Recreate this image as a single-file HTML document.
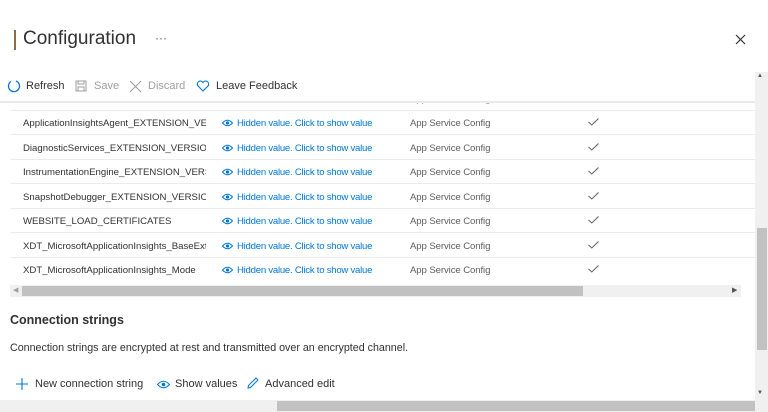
<!DOCTYPE html>
<html><head><style>
*{margin:0;padding:0;box-sizing:border-box}
body{width:768px;height:412px;overflow:hidden;background:#fff;font-family:"Liberation Sans",sans-serif;color:#323130;position:relative}
.abs{position:absolute;white-space:nowrap}
.row{position:absolute;left:10px;width:746px;height:24px;border-bottom:1px solid #edebe9;font-size:9.6px}
.row span{position:absolute;top:7px}
.n{left:13px;width:183px;overflow:hidden;color:#323130}
.h{left:227px;color:#0078d4;letter-spacing:-0.25px}
.s{left:400px;color:#605e5c;letter-spacing:-0.1px}
.c{left:578px;top:7px!important}
.e{left:212px;top:8px!important}
</style></head><body>
<div class="abs" style="left:14px;top:30px;width:2px;height:20px;background:#8a6d4a"></div>
<div class="abs" style="left:23px;top:28px;font-size:19px;color:#323130">Configuration</div>
<div class="abs" style="left:155px;top:31px;font-size:12px;color:#605e5c">···</div>
<svg class="abs" style="left:735px;top:34px" width="11" height="11"><path d="M1 1L10 10M10 1L1 10" stroke="#323130" stroke-width="1.2"/></svg>
<!-- table area -->
<div class="row" style="top:86px;height:25px"><span class="s" style="top:8px;color:#999">App Service Config</span></div>
<div class="abs" style="left:0;top:72px;width:755px;height:29px;background:#fff"></div>
<div class="abs" style="left:0;top:101px;width:755px;height:2px;background:#eaeaea"></div>
<!-- toolbar -->
<svg class="abs" style="left:7px;top:79px" width="14" height="14"><path d="M4 2.5A5.5 5.5 0 1 0 9 2" fill="none" stroke="#0078d4" stroke-width="1.3"/></svg>
<div class="abs" style="left:26px;top:80px;font-size:11px">Refresh</div>
<svg class="abs" style="left:75px;top:80px" width="12" height="12"><rect x="1" y="1" width="10" height="10" fill="none" stroke="#a19f9d"/><rect x="3" y="1" width="6" height="3" fill="none" stroke="#a19f9d"/><rect x="3" y="7" width="6" height="4" fill="none" stroke="#a19f9d"/></svg>
<div class="abs" style="left:94px;top:80px;font-size:11px;color:#a19f9d">Save</div>
<svg class="abs" style="left:129px;top:80px" width="13" height="13"><path d="M1 1L12 12M12 1L1 12" stroke="#a19f9d" stroke-width="1.1"/></svg>
<div class="abs" style="left:148px;top:80px;font-size:11px;color:#a19f9d">Discard</div>
<svg class="abs" style="left:196px;top:80px" width="14" height="12"><path d="M7 11L1.8 5.8A3 3 0 0 1 7 2.5A3 3 0 0 1 12.2 5.8Z" fill="none" stroke="#0078d4" stroke-width="1.1"/></svg>
<div class="abs" style="left:216px;top:80px;font-size:11px">Leave Feedback</div>
<div id="rows"></div>
<script>
var names=["ApplicationInsightsAgent_EXTENSION_VERSION","DiagnosticServices_EXTENSION_VERSION","InstrumentationEngine_EXTENSION_VERSION","SnapshotDebugger_EXTENSION_VERSION","WEBSITE_LOAD_CERTIFICATES","XDT_MicrosoftApplicationInsights_BaseExtensions","XDT_MicrosoftApplicationInsights_Mode"];
var tops=[111,136,160,185,209,234,258],h="";
names.forEach(function(n,i){h+='<div class="row" style="top:'+tops[i]+'px'+(i==6?';border:none':'')+'"><span class="n">'+n+'</span><span class="e"><svg width="11" height="8"><path d="M0.5 4Q5.5 -1.5 10.5 4Q5.5 9.5 0.5 4Z" fill="none" stroke="#0078d4"/><circle cx="5.5" cy="4" r="1.6" fill="#0078d4"/></svg></span><span class="h">Hidden value. Click to show value</span><span class="s">App Service Config</span><span class="c"><svg width="11" height="8"><path d="M0.5 4L3.8 7L10.5 0.5" fill="none" stroke="#605e5c"/></svg></span></div>';});
document.getElementById("rows").innerHTML=h;
</script>
<!-- table hscroll -->
<div class="abs" style="left:10px;top:285px;width:731px;height:12px;background:#f0f0f0"></div>
<div class="abs" style="left:22px;top:286px;width:561px;height:10px;background:#c1c1c1"></div>
<div class="abs" style="left:13px;top:286px;font-size:7px;color:#a0a0a0">◀</div>
<div class="abs" style="left:732px;top:286px;font-size:7px;color:#505050">▶</div>
<div class="abs" style="left:10px;top:313px;font-size:12.5px;font-weight:bold">Connection strings</div>
<div class="abs" style="left:10px;top:342px;font-size:10.7px">Connection strings are encrypted at rest and transmitted over an encrypted channel.</div>
<svg class="abs" style="left:16px;top:378px" width="12" height="12"><path d="M6 0V12M0 6H12" stroke="#0078d4" stroke-width="1.1"/></svg>
<div class="abs" style="left:35px;top:378px;font-size:11px">New connection string</div>
<svg class="abs" style="left:157px;top:380px" width="13" height="9"><path d="M0.5 4.5Q6.5 -2 12.5 4.5Q6.5 11 0.5 4.5Z" fill="none" stroke="#0078d4"/><circle cx="6.5" cy="4.5" r="1.8" fill="#0078d4"/></svg>
<div class="abs" style="left:175px;top:378px;font-size:11px">Show values</div>
<svg class="abs" style="left:247px;top:377px" width="12" height="12"><path d="M1 11L1.5 8.5L9 1L11 3L3.5 10.5Z" fill="none" stroke="#0078d4"/></svg>
<div class="abs" style="left:265px;top:378px;font-size:11px">Advanced edit</div>
<!-- outer scrollbars -->
<div class="abs" style="left:755px;top:72px;width:13px;height:328px;background:#f0f0f0"></div>
<div class="abs" style="left:757px;top:228px;width:10px;height:122px;background:#c1c1c1"></div>
<div class="abs" style="left:757px;top:73px;font-size:6px;color:#505050">▲</div>
<div class="abs" style="left:757px;top:390px;font-size:6px;color:#505050">▼</div>
<div class="abs" style="left:0;top:400px;width:768px;height:12px;background:#f0f0f0"></div>
<div class="abs" style="left:277px;top:401px;width:478px;height:10px;background:#c1c1c1"></div>
</body></html>
